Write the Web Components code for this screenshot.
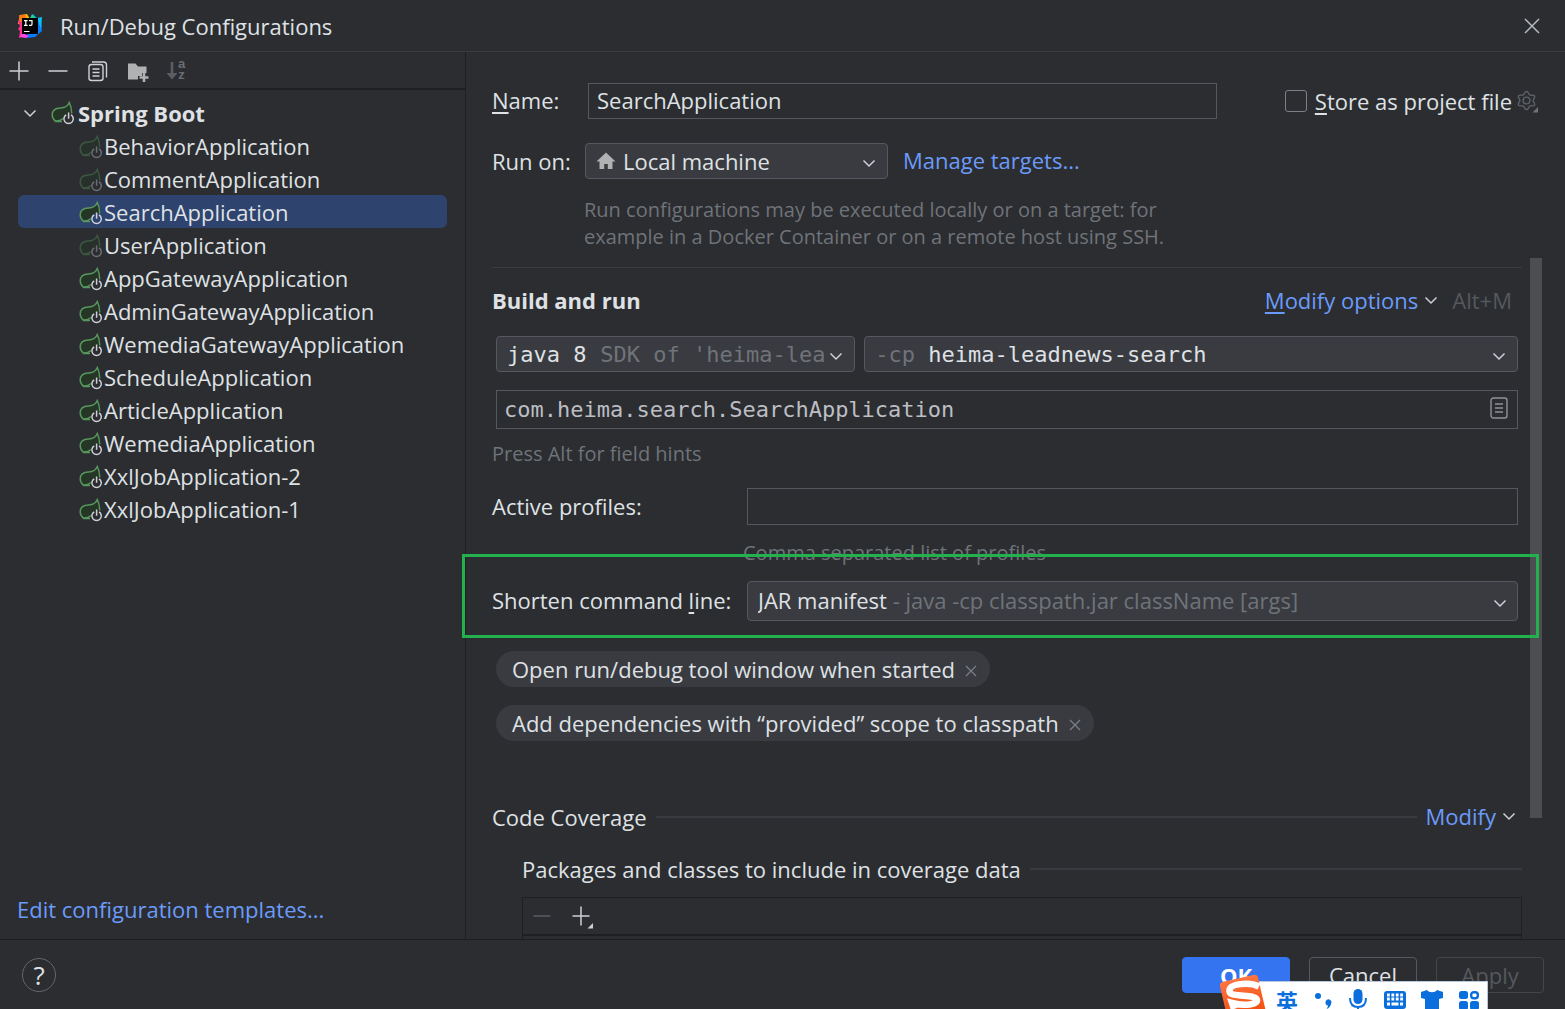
<!DOCTYPE html>
<html lang="en">
<head>
<meta charset="utf-8">
<title>Run/Debug Configurations</title>
<style>
  :root {
    --bg: #2b2d30; --text: #dfe1e5; --muted: #6f737a; --faint: #55585d;
    --link: #6b9bfa; --line: #1e1f22; --rule: #393b40; --edge: #55585e;
    --field: #393b40; --select: #2e436e; --green: #22b14c;
    --mono: "DejaVu Sans Mono", "Liberation Mono", monospace;
  }
  body { margin: 0; background: var(--bg); color: var(--text);
    font: 22px/30px "Open Sans", "Noto Sans", "Noto Sans CJK SC", sans-serif; }
</style>
</head>
<body>
<config-dialog></config-dialog>
<script>
const define = (name, html, setup) => {
  const tpl = document.createElement('template');
  tpl.innerHTML = html;
  customElements.define(name, class extends HTMLElement {
    constructor() {
      super();
      this.attachShadow({ mode: 'open' }).append(tpl.content.cloneNode(true));
    }
    connectedCallback() { if (setup) setup(this, this.shadowRoot); }
  });
};

const ICONS = {
  plus: [22, 22, '<path d="M11 1.500v19M1.500 11h19" stroke="#ced0d6" stroke-width="1.500"/>'],
  minus: [22, 22, '<path d="M1.500 11h19" stroke="#ced0d6" stroke-width="1.500"/>'],
  minusOff: [22, 22, '<path d="M2.500 11h17" stroke="#5a5d63" stroke-width="1.500"/>'],
  plusMenu: [26, 26, '<path d="M12 3.500v19M3.500 13h17" stroke="#ced0d6" stroke-width="1.500"/><path d="M24 20v5.500h-5.500z" fill="#ced0d6"/>'],
  copy: [22, 22, '<g fill="none" stroke="#ced0d6" stroke-width="1.400" transform="translate(1)"><rect x="2" y="4.500" width="14" height="16" rx="2.500"/><path d="M5 2h11.500a3 3 0 0 1 3 3v12.500"/><path d="M5.500 9h7M5.500 12.500h7M5.500 16h7"/></g>'],
  folder: [24, 22, '<g transform="translate(2 1)"><path d="M1 2.500h7.500l2.500 3h8.500v6.500h-4.500v3h-4v3.500H1z" fill="#afb1b3"/><path d="M17 12v9M12.500 16.500h9" stroke="#afb1b3" stroke-width="2.600"/></g>'],
  chevron: [14, 14, '<path d="M1.500 4.500 7 10l5.500-5.500" fill="none" stroke="#ced0d6" stroke-width="1.500"/>'],
  close: [16, 16, '<path d="M1 1l14 14M15 1L1 15" stroke="#b4b8bf" stroke-width="1.500"/>'],
  remove: [12, 12, '<path d="M1 1l10 10M11 1L1 11" stroke="#7a7e85" stroke-width="1.300"/>'],
  home: [20, 18, '<path d="M10 0.500 0.500 9.500h3V17h4.700v-5h3.600v5h4.700V9.500h3z" fill="#afb1b3"/>'],
  list: [18, 22, '<g fill="none" stroke="#8f9299" stroke-width="1.400"><rect x="1" y="1" width="16" height="20" rx="2.500"/><path d="M5 7h8M5 11h8M5 15h8"/></g>'],
  gear: [24, 24, '<g fill="none" stroke="#5f6268" stroke-width="1.400"><path d="M10.500 1.500c2.200 0 1.800 2.600 3.300 3.500 1.600.9 3.400-.9 4.600.9 1.100 1.900-1.300 2.800-1.300 4.600s2.400 2.700 1.300 4.600c-1.200 1.800-3 0-4.600.9-1.500.9-1.100 3.500-3.300 3.500s-1.800-2.600-3.300-3.500c-1.600-.9-3.400.9-4.600-.9-1.100-1.900 1.300-2.800 1.300-4.600S1.500 7.800 2.600 5.900c1.200-1.800 3 0 4.600-.9 1.500-.9 1.100-3.500 3.300-3.500z"/><circle cx="10.500" cy="10.500" r="3.400"/></g><path d="M22 17v5.500h-5.500z" fill="#6f737a"/>'],
  spring: [24, 24, '<path d="M18.300 1.500C17 5 14.500 6.800 9.500 7 4 7.200 1.200 10 1.200 14c0 3 1.500 5 3.800 6.400h6C11 15 14.500 11.500 20.600 12 20.800 8 20 5 18.300 1.500z" fill="#253627"/><g fill="none" stroke="#57965c" stroke-width="1.500"><path d="M20.700 12.500C20.800 8 20 5 18.300 1.500 17 5 14.500 6.800 9.500 7 4 7.200 1.200 10 1.200 14c0 3 1.300 4.800 3.600 6.600H11M4 20c3 .2 6-.6 8-2.500"/></g><g fill="none" stroke="#ced0d6" stroke-width="1.500"><path d="M15.200 13.800a4.700 4.700 0 1 0 4.800 0M17.600 11.500v6.200"/></g>'],
  logo: [26, 26, '<path d="M3 2l7-1 3 5-5 6-7-1z" fill="#fdb60d"/><path d="M1 8l6-5 6 6-5 14-6 2 1-7-2-2 2-3z" fill="#fc318c"/><path d="M2 2l7 0-2 6-4 1z" fill="#f97a12"/><path d="M13 5l3-4 4 4 4 0 1 13-7 6-8 1z" fill="#087cfa"/><path d="M15 1l4 4-6 1z" fill="#21d789"/><path d="M20 5l5-1-1 12z" fill="#07c3f2"/><path d="M3 24l2-4 7 3-3 2z" fill="#ff45ed"/><rect x="5" y="5" width="16" height="16" fill="#000"/><path d="M7 7.700h3.600M8.800 7.700v4.600M7 12.300h3.600M12 7.700h3v3.600q0 1-1 1h-2M7 18.500h5.500" fill="none" stroke="#fff" stroke-width="1.200"/>'],
  sogou: [48, 38, '<defs><linearGradient id="g" x2="0" y2="1"><stop stop-color="#ff7440"/><stop offset="1" stop-color="#f04a0c"/></linearGradient></defs><rect x="4" y="7" width="39" height="42" rx="4" fill="url(#g)" transform="rotate(-13 23 26)"/><path d="M40 15.500C31 11 9.500 12 10.500 20.500c.8 6.500 27 2 27.500 8.500.4 4.500-12 6.500-25 3l2 6" fill="none" stroke="#fff" stroke-width="6.500"/>'],
  punct: [22, 20, '<g transform="translate(2)"><circle cx="4" cy="6" r="3" fill="#0a6fdc"/><path d="M11.500 12.500a3 3 0 1 1 5.500 1.500c-.5 2.500-2 4-4.500 5 1-1.500 1.500-2.500 1.500-3.500-1.500 0-2.500-1.200-2.500-3z" fill="#0a6fdc"/></g>'],
  mic: [22, 24, '<g transform="translate(1)"><rect x="5.500" y="1" width="9" height="15" rx="4.500" fill="#0a6fdc"/><path d="M2 10c0 6 3 9 8 9s8-3 8-9M10 19v4M5 22.500h10" fill="none" stroke="#0a6fdc" stroke-width="2"/></g>'],
  keys: [24, 20, '<rect x="1" y="1" width="22" height="18" rx="3" fill="#0a6fdc"/><path d="M4 5h16M4 9h16" stroke="#fff" stroke-width="2.800" stroke-dasharray="2.800 1.600"/><path d="M4 14h3M8.500 14h7M17 14h3" stroke="#fff" stroke-width="2.800"/>'],
  shirt: [24, 22, '<path d="M7 1c2 3 8 3 10 0l6 2v6l-4 1v11H5V10L1 9V3z" fill="#0a6fdc"/>'],
  tiles: [22, 22, '<rect x="1" y="2" width="9" height="8" rx="2.500" fill="#0a6fdc"/><rect x="13.200" y="3.200" width="6.600" height="6" rx="2.500" fill="none" stroke="#0a6fdc" stroke-width="2.400"/><rect x="1" y="12" width="9" height="9" rx="2.500" fill="#0a6fdc"/><rect x="12" y="12" width="9" height="9" rx="2.500" fill="#0a6fdc"/>']
};

define('ui-icon', '<style>:host{display:inline-flex;flex:none}svg{display:block}</style>', (el, root) => {
  if (root.querySelector('svg')) return;
  const [w, h, art] = ICONS[el.getAttribute('name')];
  root.innerHTML += `<svg width="${w}" height="${h}" viewBox="0 0 ${w} ${h}" aria-hidden="true">${art}</svg>`;
});

define('tool-button', `<style>
  :host { display: inline-flex; }
  button { display: flex; align-items: center; justify-content: center; min-width: 18px; height: 26px;
    padding: 0; border: 0; background: none; color: var(--faint); font: inherit; }
</style><button type="button"><slot></slot></button>`, (el, root) => {
  root.querySelector('button').setAttribute('aria-label', el.getAttribute('label'));
  root.querySelector('button').disabled = el.hasAttribute('disabled');
});

define('sort-icon', `<style>
  :host { display: flex; align-items: center; color: #6a6d73; }
  div { display: grid; font: bold 13px/11px "Liberation Sans", sans-serif; padding-bottom: 3px; }
</style><svg width="12" height="20" viewBox="0 0 12 20"><path d="M6 1v12" stroke="#5a5d63" stroke-width="2.600"/><path d="M0.500 12h11L6 18.500z" fill="#5a5d63"/></svg><div><span>a</span><span>z</span></div>`);

define('title-bar', `<style>
  :host { display: flex; align-items: center; gap: 17px; height: 51px; padding: 0 24px 0 17px;
    border-bottom: 1px solid var(--rule); }
  h1 { flex: 1; margin: 0; font-size: inherit; font-weight: 400; }
</style><ui-icon name="logo"></ui-icon><h1><slot></slot></h1>
<tool-button label="Close"><ui-icon name="close"></ui-icon></tool-button>`);

define('tree-row', `<style>
  :host { display: flex; align-items: center; gap: 1px; height: 33px; padding-left: 61px; border-radius: 6px; }
  :host([selected]) { background: var(--select); }
  :host([idle]) ui-icon { opacity: .4; }
  ui-icon { padding-top: 2px; }
</style><ui-icon name="spring"></ui-icon><span><slot></slot></span>`);

define('config-tree', `<style>
  :host { display: flex; flex-direction: column; min-height: 0; border-right: 1px solid var(--line); }
  .tools { display: flex; align-items: center; gap: 17px; height: 35px; padding: 1px 8px 0; border-bottom: 2px solid var(--line); }
  .tree { flex: 1; padding: 6px 18px; }
  .group { display: flex; align-items: center; height: 33px; gap: 3px; padding-left: 5px; font-weight: 700; }
  .group ui-icon:first-child { padding-right: 11px; }
  a { align-self: flex-start; padding: 0 17px 15px; color: var(--link); text-decoration: none; }
</style>
<div class="tools">
  <tool-button label="Add"><ui-icon name="plus"></ui-icon></tool-button>
  <tool-button label="Remove"><ui-icon name="minus"></ui-icon></tool-button>
  <tool-button label="Copy"><ui-icon name="copy"></ui-icon></tool-button>
  <tool-button label="New folder"><ui-icon name="folder"></ui-icon></tool-button>
  <tool-button label="Sort" disabled><sort-icon></sort-icon></tool-button>
</div>
<div class="tree">
  <div class="group"><ui-icon name="chevron"></ui-icon><ui-icon name="spring"></ui-icon><span>Spring Boot</span></div>
  <tree-row idle>BehaviorApplication</tree-row>
  <tree-row idle>CommentApplication</tree-row>
  <tree-row selected>SearchApplication</tree-row>
  <tree-row idle>UserApplication</tree-row>
  <tree-row>AppGatewayApplication</tree-row>
  <tree-row>AdminGatewayApplication</tree-row>
  <tree-row>WemediaGatewayApplication</tree-row>
  <tree-row>ScheduleApplication</tree-row>
  <tree-row>ArticleApplication</tree-row>
  <tree-row>WemediaApplication</tree-row>
  <tree-row>XxlJobApplication-2</tree-row>
  <tree-row>XxlJobApplication-1</tree-row>
</div>
<a href="#templates">Edit configuration templates...</a>`);

define('tag-chip', `<style>
  :host { display: flex; align-items: center; gap: 10px; height: 36px; padding: 0 13px 0 16px;
    border-radius: 18px; background: var(--field); }
  button { display: flex; padding: 3px 0 0; border: 0; background: none; }
</style><span><slot></slot></span><button type="button" aria-label="Remove option"><ui-icon name="remove"></ui-icon></button>`);

define('section-title', `<style>
  :host { display: flex; align-items: center; gap: 9px; height: 30px; }
  i { flex: 1; height: 2px; background: var(--rule); }
</style><span><slot></slot></span><i></i><slot name="action"></slot>`);

define('run-editor', `<style>
  :host { display: flex; flex-direction: column; min-width: 0; min-height: 0; }
  * { box-sizing: border-box; }
  a { color: var(--link); text-decoration: none; }
  u { text-underline-offset: 3px; text-decoration-thickness: 2px; }
  .head { display: grid; padding: 31px 25px 8px 26px; }
  .row { display: flex; align-items: center; }
  .name { height: 36px; }
  .name label:first-child { width: 96px; padding-bottom: 2px; }
  .name input[type=text] { flex: 1; height: 100%; margin-right: 68px; }
  input[type=text] { min-width: 0; padding: 0 8px 2px; border: 1px solid var(--edge); background: none; color: inherit; font: inherit; outline: 0; }
  input[type=checkbox] { appearance: none; flex: none; width: 22px; height: 22px; margin: 0 8px 0 0;
    border: 1px solid #7c8087; border-radius: 3px; }
  .name .store { padding-right: 4px; }
  .name tool-button { padding-top: 2px; }
  .target { margin-top: 24px; }
  .target > label { width: 93px; }
  .target a { padding: 0 0 2px 15px; }
  .combo { display: flex; align-items: center; height: 36px; padding: 0 11px 0 5px; border: 1px solid var(--edge);
    border-radius: 4px; background: var(--field); overflow: hidden; }
  .combo select { appearance: none; flex: none; margin: 0; padding: 0 0 0 5px; border: 0; background: none; color: var(--text); font: inherit; outline: 0; }
  .combo .rest { flex: 1; min-width: 0; overflow: hidden; white-space: pre; color: var(--muted); }
  .combo .before { padding-left: 5px; color: var(--muted); white-space: pre; }
  .combo .before + select { padding-left: 0; }
  .combo ui-icon[name=chevron] { padding-top: 3px; }
  .boxes .combo select, .boxes .combo span { padding-top: 2px; }
  .machine { width: 303px; gap: 2px; }
  .machine ui-icon[name=home] { padding-left: 5px; }
  .hint { color: var(--muted); font-size: 20px; line-height: 27px; }
  .head .hint { margin: 17px 0 0 92px; }

  .view { display: flex; flex: 1; min-height: 0; gap: 8px; padding: 0 23px 0 26px; overflow-x: visible; overflow-y: clip; }
  .page { flex: 1; min-width: 0; padding-top: 9px; }
  .thumb { flex: none; width: 12px; height: 560px; background: #4d4e51; }
  hr { margin: 0; border: 0; border-top: 1px solid var(--rule); }
  .build { height: 30px; margin: 17px 10px 21px 0; }
  .build h2 { flex: 1; margin: 0; font-size: inherit; }
  .build a { margin-right: 6px; }
  .build span { margin-left: 14px; color: var(--faint); }
  .boxes { display: grid; grid-template-columns: 359fr 653fr; gap: 18px 9px; margin: 0 4px; font-family: var(--mono); }
  .main-class { grid-column: 1 / -1; display: flex; align-items: center; height: 39px; padding-right: 9px; border: 1px solid var(--edge); }
  .main-class input[type=text] { flex: 1; padding: 0 7px; border: 0; color: #bcbec4; }
  .main-class tool-button { padding-bottom: 4px; }
  .keys { margin: 11px 0 21px; }
  .pair > label { width: 255px; flex: none; padding-bottom: 2px; }
  .pair { padding-right: 4px; }
  .pair > :last-child { flex: 1; }
  .pair input[type=text] { height: 37px; }
  .profiles { margin: 14px 0 15px 251px; }
  .shorten { position: relative; }
  .shorten .combo { height: 40px; padding-right: 10px; }
  .shorten select, .shorten span { padding-bottom: 2px; }
  .shorten::after { content: ""; position: absolute; z-index: 1; inset: -27px -17px -17px -30px; border: 3px solid var(--green); pointer-events: none; }
  .tags { display: grid; justify-items: start; gap: 18px; margin: 30px 4px 61px; }
  .modify { display: flex; align-items: center; gap: 6px; padding: 0 6px 2px 0; }
  .packages { margin: 22px 0 13px 30px; }
  .filter { margin-left: 30px; height: 60px; border: 1px solid var(--line); }
  .filter div { display: flex; align-items: center; gap: 16px; height: 38px; padding-left: 8px; border-bottom: 2px solid var(--line); }
</style>
<div class="head">
  <div class="row name">
    <label for="name"><u>N</u>ame:</label>
    <input type="text" id="name" value="SearchApplication">
    <input type="checkbox" id="store"><label class="store" for="store"><u>S</u>tore as project file</label>
    <tool-button label="Project file settings" disabled><ui-icon name="gear"></ui-icon></tool-button>
  </div>
  <div class="row target">
    <label for="target">Run on:</label>
    <div class="combo machine"><ui-icon name="home"></ui-icon>
      <select id="target"><option>Local machine</option></select><span class="rest"></span><ui-icon name="chevron"></ui-icon></div>
    <a href="#targets">Manage targets...</a>
  </div>
  <div class="hint">Run configurations may be executed locally or on a target: for<br>example in a Docker Container or on a remote host using SSH.</div>
</div>
<div class="view">
  <div class="page">
    <hr>
    <div class="row build"><h2>Build and run</h2><a href="#options"><u>M</u>odify options</a><ui-icon name="chevron"></ui-icon><span>Alt+M</span></div>
    <div class="boxes">
      <div class="combo"><select aria-label="JDK"><option>java 8</option></select><span class="rest"> SDK of 'heima-lea</span><ui-icon name="chevron"></ui-icon></div>
      <div class="combo"><span class="before">-cp </span><select aria-label="Classpath module"><option>heima-leadnews-search</option></select><span class="rest"></span><ui-icon name="chevron"></ui-icon></div>
      <div class="main-class"><input type="text" aria-label="Main class" value="com.heima.search.SearchApplication"><tool-button label="Browse"><ui-icon name="list"></ui-icon></tool-button></div>
    </div>
    <div class="hint keys">Press Alt for field hints</div>
    <div class="row pair"><label for="profiles">Active profiles:</label><input type="text" id="profiles"></div>
    <div class="hint profiles">Comma separated list of profiles</div>
    <div class="row pair shorten"><label for="shorten">Shorten command <u>l</u>ine:</label>
      <div class="combo"><select id="shorten"><option>JAR manifest</option></select><span class="rest"> - java -cp classpath.jar className [args]</span><ui-icon name="chevron"></ui-icon></div></div>
    <div class="tags"><tag-chip>Open run/debug tool window when started</tag-chip><tag-chip>Add dependencies with “provided” scope to classpath</tag-chip></div>
    <section-title>Code Coverage<div slot="action" class="modify"><a href="#coverage">Modify</a><ui-icon name="chevron"></ui-icon></div></section-title>
    <section-title class="packages">Packages and classes to include in coverage data</section-title>
    <div class="filter"><div><tool-button label="Remove pattern" disabled><ui-icon name="minusOff"></ui-icon></tool-button><tool-button label="Add pattern"><ui-icon name="plusMenu"></ui-icon></tool-button></div></div>
  </div>
  <div class="thumb"></div>
</div>`);

define('push-button', `<style>
  :host { display: inline-flex; }
  button { width: 108px; height: 36px; padding: 0; border: 1px solid var(--edge); border-radius: 4px;
    background: none; color: var(--text); font: inherit; line-height: 30px; }
  :host([primary]) button { border-color: #3574f0; background: #3574f0; color: #fff; font-weight: 700; }
  :host([disabled]) button { border-color: #43454a; color: var(--faint); }
</style><button type="button"><slot></slot></button>`, (el, root) => {
  root.querySelector('button').disabled = el.hasAttribute('disabled');
});

define('dialog-footer', `<style>
  :host { display: flex; align-items: flex-start; gap: 19px; height: 52px; padding: 17px 21px 0 22px; border-top: 1px solid var(--line); }
  .help { width: 34px; height: 34px; margin: 1px auto 0 0; padding: 0; border: 1px solid #63666c; border-radius: 50%;
    background: none; color: var(--text); font: 26px/30px "Open Sans", sans-serif; }
</style>
<button class="help" type="button">?</button>
<push-button primary>OK</push-button><push-button>Cancel</push-button><push-button disabled>Apply</push-button>`);

define('ime-bar', `<style>
  :host { position: absolute; right: 77px; bottom: 0; display: flex; align-items: flex-end; width: 269px; height: 38px; overflow: hidden; }
  .bar { display: flex; flex: 1; align-items: center; justify-content: space-between; box-sizing: border-box; height: 28px;
    margin-left: -30px; padding: 8px 7px 0 39px; border: 1px solid #b9c8de; border-width: 1px 1px 0 0; background: #fff;
    color: #0a6fdc; font: 700 22px/26px "Noto Sans CJK SC", sans-serif; }
  ui-icon { z-index: 1; }
</style><ui-icon name="sogou"></ui-icon>
<div class="bar"><span>英</span><ui-icon name="punct"></ui-icon><ui-icon name="mic"></ui-icon><ui-icon name="keys"></ui-icon><ui-icon name="shirt"></ui-icon><ui-icon name="tiles"></ui-icon></div>`);

define('config-dialog', `<style>
  :host { position: relative; display: flex; flex-direction: column; height: 100vh; overflow: hidden; }
  .body { display: grid; grid-template-columns: 466px 1fr; flex: 1; min-height: 0; }
</style>
<title-bar>Run/Debug Configurations</title-bar>
<div class="body"><config-tree></config-tree><run-editor></run-editor></div>
<dialog-footer></dialog-footer>
<ime-bar></ime-bar>`);
</script>
</body>
</html>
